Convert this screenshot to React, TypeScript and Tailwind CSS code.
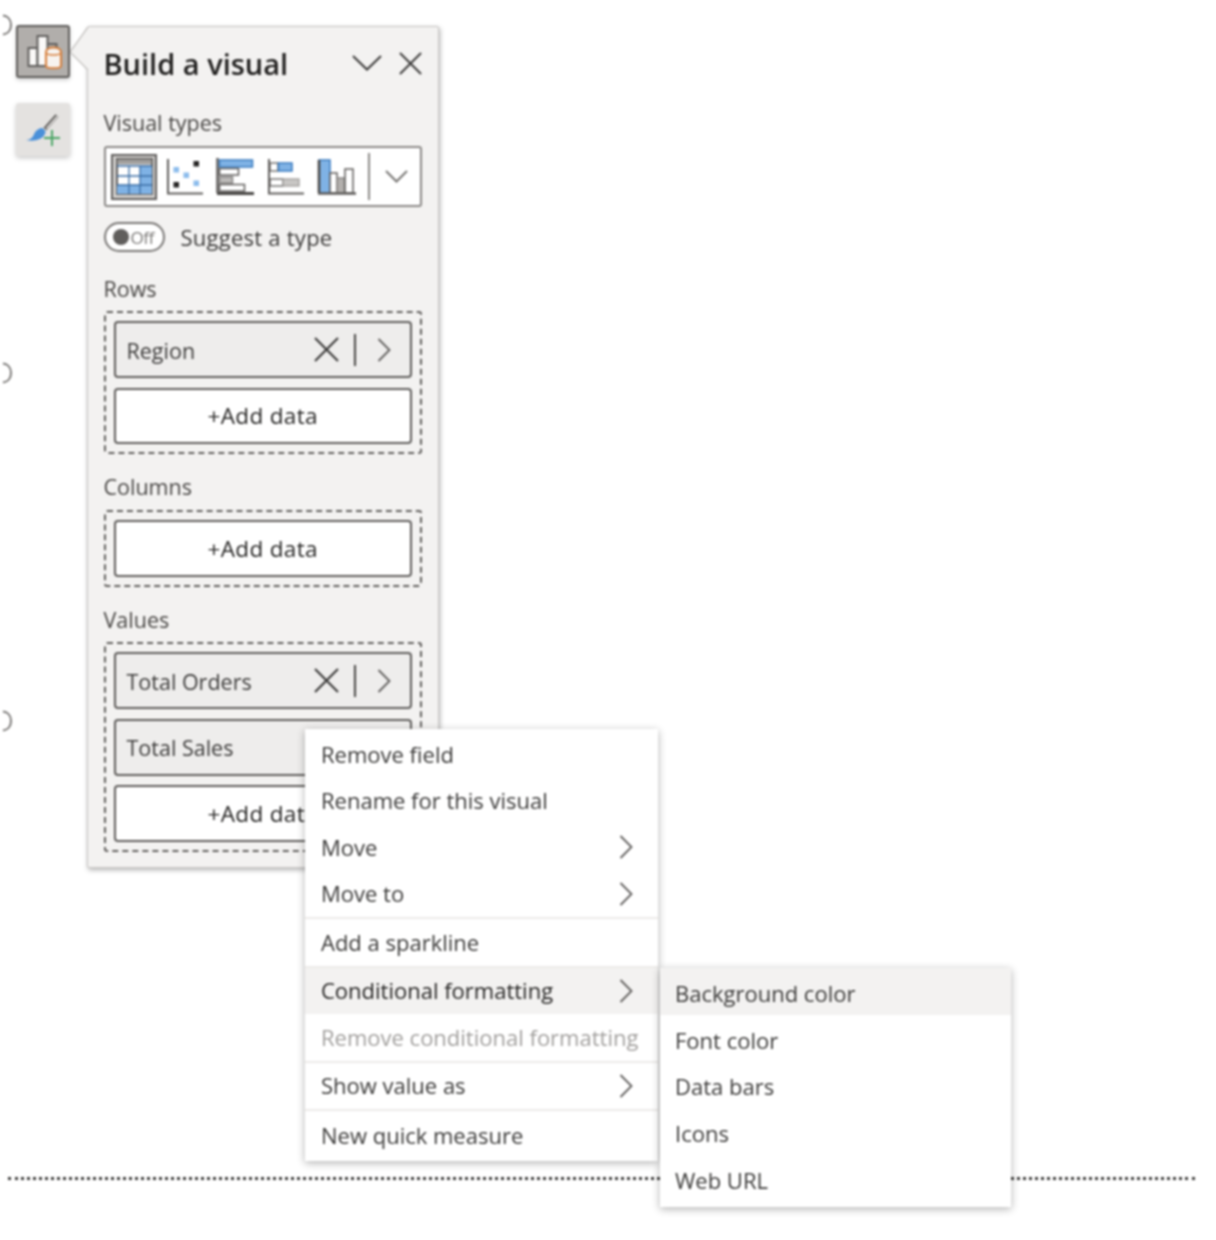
const FONT = 'font-["Open_Sans","Noto_Sans",sans-serif]';

function Arc({ className }: { className: string }) {
  return (
    <svg className={`absolute left-0 ${className}`} width="14" height="24" viewBox="0 0 14 24" fill="none">
      <path d="M3 2.500C8 3 11 7 11 12S8 21 3 21.500" stroke="#7a7876" strokeWidth="2" />
    </svg>
  );
}

function Cross({ size, className }: { size: number; className?: string }) {
  return (
    <svg className={className} width={size} height={size} viewBox="0 0 24 24" fill="none">
      <path d="M1 1l22 22M23 1L1 23" stroke="currentColor" strokeWidth="2" />
    </svg>
  );
}

function ChevronDown({ w, h, className }: { w: number; h: number; className?: string }) {
  return (
    <svg className={className} width={w} height={h} viewBox={`0 0 ${w} ${h}`} fill="none">
      <path d={`M1 1L${w / 2} ${h - 1.500}L${w - 1} 1`} stroke="currentColor" strokeWidth="2" />
    </svg>
  );
}

function ChevronRight({ className }: { className?: string }) {
  return (
    <svg className={className} width="14" height="24" viewBox="0 0 14 24" fill="none">
      <path d="M1.500 1L12.500 12L1.500 23" stroke="currentColor" strokeWidth="1.800" />
    </svg>
  );
}

function BuildIcon() {
  return (
    <svg width="54" height="53" viewBox="16 25 54 53" fill="none">
      <rect x="28.500" y="48" width="9" height="18" fill="#faf9f8" stroke="#605e5c" strokeWidth="2" />
      <rect x="37.500" y="36" width="10" height="30" fill="#faf9f8" stroke="#605e5c" strokeWidth="2" />
      <path d="M47.500 44h9v6" stroke="#605e5c" strokeWidth="2" />
      <path d="M46 52c0-6 15-6 15 0v14c0 3-15 3-15 0z" fill="#f7f3ef" stroke="#d67f3c" strokeWidth="2" />
      <path d="M46 52c0 4 15 4 15 0" stroke="#d67f3c" strokeWidth="1.500" />
    </svg>
  );
}

function BrushIcon() {
  return (
    <svg width="54" height="53" viewBox="16 103 54 53" fill="none">
      <path d="M57 115.500l-12 13.500" stroke="#605e5c" strokeWidth="4" />
      <path d="M57.500 116l-11 12.500" stroke="#e8e6e4" strokeWidth="1.400" />
      <path d="M26 140c5 0 7-3 8.500-7 1.500-3 5-5 8-5l3 3c0 4-3 7-6 8-4 2-9 2-13.500 1z" fill="#4a90d9" />
      <path d="M52 130v16M44 138h16" stroke="#4aa564" strokeWidth="2" />
    </svg>
  );
}

function TableIcon() {
  return (
    <svg width="46" height="46" viewBox="111 153 46 46" fill="none">
      <rect x="112" y="154" width="44" height="44" fill="#d2d0ce" stroke="#605e5c" strokeWidth="2" />
      <rect x="117" y="158" width="35" height="35" fill="#fff" stroke="#605e5c" strokeWidth="2" />
      <rect x="117.500" y="158.500" width="34" height="5" fill="#a19f9d" />
      <rect x="140" y="165" width="12" height="28" fill="#7fb2e5" />
      <rect x="117" y="184" width="35" height="9" fill="#7fb2e5" />
      <path d="M129 165v28M140 165v28M117 165h35M117 175h35M117 184h35" stroke="#3b6ea5" strokeWidth="1.300" />
    </svg>
  );
}

function ScatterIcon() {
  return (
    <svg width="38" height="38" viewBox="166 158 38 38" fill="none">
      <path d="M168 159v34.500h35" stroke="#605e5c" strokeWidth="2" />
      <rect x="193.500" y="161" width="5.500" height="5.500" fill="#252423" />
      <rect x="173.500" y="182" width="5.500" height="5.500" fill="#252423" />
      <rect x="173.500" y="167" width="5.500" height="5.500" fill="#8cbcec" />
      <rect x="183.500" y="172.500" width="5.500" height="5.500" fill="#8cbcec" />
      <rect x="193.500" y="180.500" width="5.500" height="5.500" fill="#8cbcec" />
    </svg>
  );
}

function BarIcon() {
  return (
    <svg width="40" height="40" viewBox="215 157 40 40" fill="none">
      <path d="M217.500 158v35" stroke="#605e5c" strokeWidth="2.500" />
      <rect x="219.500" y="160" width="33" height="7" fill="#7fb2e5" stroke="#3b7cc0" strokeWidth="1.500" />
      <rect x="219.500" y="168.500" width="19" height="6.500" fill="#fff" stroke="#605e5c" strokeWidth="1.500" />
      <rect x="219.500" y="177" width="13" height="6" fill="#bdbbb9" stroke="#8a8886" strokeWidth="1.500" />
      <rect x="219.500" y="184.500" width="25" height="6.500" fill="#fff" stroke="#605e5c" strokeWidth="1.500" />
      <path d="M217 193.500h37" stroke="#484644" strokeWidth="3" />
    </svg>
  );
}

function ClusteredIcon() {
  return (
    <svg width="38" height="38" viewBox="267 158 38 38" fill="none">
      <path d="M269 159v34.500h35" stroke="#605e5c" strokeWidth="2" />
      <rect x="270" y="163" width="8" height="8" fill="#fff" stroke="#605e5c" strokeWidth="1.300" />
      <rect x="278.500" y="163" width="13.500" height="8" fill="#7fb2e5" stroke="#3b7cc0" strokeWidth="1.500" />
      <rect x="270" y="179" width="13" height="7" fill="#fff" stroke="#605e5c" strokeWidth="1.300" />
      <rect x="283" y="179" width="16" height="7" fill="#c8c6c4" stroke="#a19f9d" strokeWidth="1.300" />
    </svg>
  );
}

function ColumnIcon() {
  return (
    <svg width="40" height="38" viewBox="317 158 40 38" fill="none">
      <rect x="319" y="160" width="11" height="33" fill="#7fb2e5" stroke="#3b7cc0" strokeWidth="1.500" />
      <path d="M319 160v33" stroke="#484644" strokeWidth="2.500" />
      <rect x="330" y="173" width="7" height="20" fill="#fff" stroke="#605e5c" strokeWidth="1.500" />
      <rect x="337" y="178" width="7.500" height="15" fill="#b3b0ad" stroke="#8a8886" strokeWidth="1.500" />
      <rect x="345" y="169" width="8" height="24" fill="#fff" stroke="#605e5c" strokeWidth="1.500" />
      <path d="M318 193.500h38" stroke="#605e5c" strokeWidth="2.500" />
    </svg>
  );
}

function Pill({ label }: { label: string }) {
  return (
    <div className="flex h-[57px] items-center rounded-[4px] border-2 border-[#5f5d5b] bg-[#eeedec] pl-[11px] pr-[19px]">
      <span className="flex-1 pt-[2px] text-[21.500px] leading-none text-[#3b3a39]">{label}</span>
      <Cross size={25} className="text-[#3b3a39]" />
      <div className="ml-[15px] mr-[21px] h-[32px] w-[2px] bg-[#484644]" />
      <ChevronRight className="text-[#605e5c]" />
    </div>
  );
}

function AddData() {
  return (
    <div className="flex h-[56.500px] items-center justify-center rounded-[4px] border-2 border-[#5f5d5b] bg-white pt-[1px] text-[22.500px] tracking-[0.35px] text-[#252423]">
      +Add data
    </div>
  );
}

function Well({ children }: { children: React.ReactNode }) {
  return (
    <div className="flex flex-col gap-[9.500px] rounded-[3px] border-2 border-dashed border-[#605e5c] p-[8px]">
      {children}
    </div>
  );
}

function Label({ text, className }: { text: string; className: string }) {
  return <div className={`h-[28px] text-[21.500px] leading-[28px] text-[#484644] ${className}`}>{text}</div>;
}

type MenuRow = { label: string; arrow?: boolean; hover?: boolean; disabled?: boolean; sep?: boolean; h: string };

const menuRows: MenuRow[] = [
  { label: 'Remove field', h: 'h-[46.500px]' },
  { label: 'Rename for this visual', h: 'h-[46.500px]' },
  { label: 'Move', arrow: true, h: 'h-[46.500px]' },
  { label: 'Move to', arrow: true, h: 'h-[46.500px]' },
  { label: 'Add a sparkline', sep: true, h: 'h-[48.500px]' },
  { label: 'Conditional formatting', arrow: true, hover: true, sep: true, h: 'h-[48.500px]' },
  { label: 'Remove conditional formatting', disabled: true, h: 'h-[46.500px]' },
  { label: 'Show value as', arrow: true, sep: true, h: 'h-[48.500px]' },
  { label: 'New quick measure', sep: true, h: 'h-[50px]' },
];

const subRows = ['Background color', 'Font color', 'Data bars', 'Icons', 'Web URL'];

export default function App() {
  return (
    <div className={`relative h-[1240px] w-[1216px] overflow-hidden bg-white blur-[0.8px] ${FONT}`}>
      <Arc className="top-[13px]" />
      <Arc className="top-[361px]" />
      <Arc className="top-[709px]" />

      <div className="flex items-start pl-[16px] pt-[25px]">
        <div className="flex flex-col gap-[25px]">
          <div className="flex h-[53px] w-[54px] items-center justify-center rounded-[3px] border-2 border-[#5f5d5b] bg-[#b1aeab] shadow-[0_2px_4px_rgba(0,0,0,0.2)]">
            <div className="shrink-0"><BuildIcon /></div>
          </div>
          <div className="h-[53px] w-[54px] rounded-[3px] bg-[#e4e2e0] shadow-[0_2px_5px_rgba(0,0,0,0.22)]">
            <BrushIcon />
          </div>
        </div>

        <div className="relative ml-[16.500px] mt-px h-[842px] w-[352.500px] rounded-[2px] border border-[#c8c6c4] bg-[#f3f2f1] px-[16px] shadow-[1px_2px_5px_rgba(0,0,0,0.3)]">
          <svg className="absolute left-[-18px] top-0" width="20" height="46" viewBox="0 0 20 46" fill="none">
            <path d="M18 0L0 25L18 43" fill="#f3f2f1" stroke="#c8c6c4" strokeWidth="1.500" />
          </svg>
          <div className="flex h-[74px] items-center pb-[2px]">
            <span className="flex-1 text-[29px] font-semibold leading-none text-[#201f1e]">Build a visual</span>
            <ChevronDown w={30} h={16} className="mr-[17px] text-[#3b3a39]" />
            <Cross size={23} className="text-[#3b3a39]" />
          </div>
          <Label text="Visual types" className="mt-[8px]" />
          <div className="mt-[9px] flex h-[61px] w-[318px] items-center rounded-[3px] border-2 border-[#8a8886] bg-white pl-[5px]">
            <TableIcon />
            <div className="ml-[9px]"><ScatterIcon /></div>
            <div className="ml-[11px]"><BarIcon /></div>
            <div className="ml-[12px]"><ClusteredIcon /></div>
            <div className="ml-[12px]"><ColumnIcon /></div>
            <div className="ml-[11px] h-[47px] w-[2px] bg-[#8a8886]" />
            <ChevronDown w={23} h={13} className="ml-[15px] text-[#797775]" />
          </div>
          <div className="mt-[15px] flex items-center">
            <div className="flex h-[30px] w-[61px] items-center rounded-full border-2 border-[#797775] bg-white pl-[7px]">
              <div className="h-[16px] w-[16px] rounded-full bg-[#605e5c]" />
              <span className="ml-[2px] text-[17px] leading-none tracking-[-0.4px] text-[#797775]">Off</span>
            </div>
            <span className="ml-[16px] text-[22px] leading-none tracking-[0.25px] text-[#3b3a39]">Suggest a type</span>
          </div>
          <Label text="Rows" className="mt-[23px]" />
          <div className="mt-[8px]">
            <Well>
              <Pill label="Region" />
              <AddData />
            </Well>
          </div>
          <Label text="Columns" className="mt-[19px]" />
          <div className="mt-[9px]">
            <Well>
              <AddData />
            </Well>
          </div>
          <Label text="Values" className="mt-[19.500px]" />
          <div className="mt-[8px]">
            <Well>
              <Pill label="Total Orders" />
              <Pill label="Total Sales" />
              <AddData />
            </Well>
          </div>
        </div>
      </div>

      <div className="ml-[8px] mt-[309px] w-[1187px] border-t-[3px] border-dotted border-[#3b3a39]" />

      <div className="absolute left-[305px] top-[729px] w-[353px] bg-white py-[2px] shadow-[0_2px_8px_rgba(0,0,0,0.3)]">
        {menuRows.map((r) => (
          <div
            key={r.label}
            className={`flex items-center pl-[16px] pr-[25px] text-[22px] ${r.h} ${r.sep ? 'border-t-2 border-[#edebe9]' : ''} ${r.hover ? 'bg-[#f3f2f1] text-[#252423]' : r.disabled ? 'text-[#a19f9d]' : 'text-[#3b3a39]'}`}
          >
            <span className="flex-1 whitespace-nowrap">{r.label}</span>
            {r.arrow && <ChevronRight className="text-[#605e5c]" />}
          </div>
        ))}
      </div>

      <div className="absolute left-[660px] top-[968px] w-[351px] bg-white pb-[6px] shadow-[0_2px_8px_rgba(0,0,0,0.3)]">
        {subRows.map((s, i) => (
          <div
            key={s}
            className={`flex h-[46.600px] items-center pl-[15px] pt-[5px] text-[22px] text-[#3b3a39] ${i === 0 ? 'bg-[#f3f2f1]' : ''}`}
          >
            {s}
          </div>
        ))}
      </div>
    </div>
  );
}
